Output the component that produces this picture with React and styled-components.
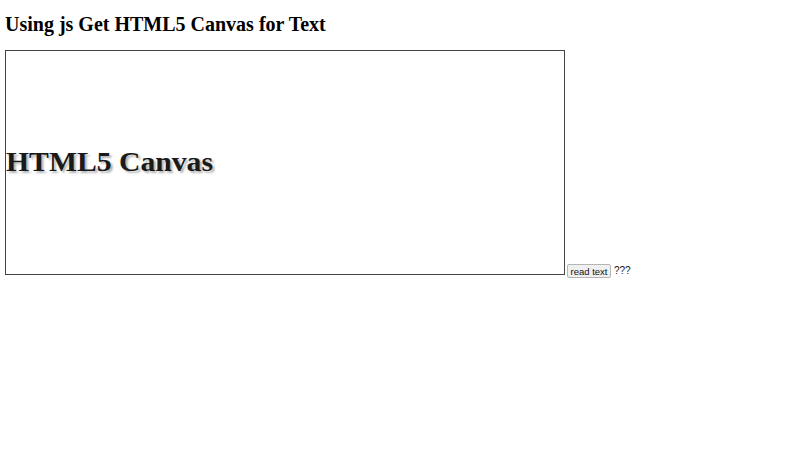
import React from "react";
import styled, { createGlobalStyle } from "styled-components";

const GlobalStyle = createGlobalStyle`
  html, body {
    margin: 0;
    background: #ffffff;
  }
  body {
    padding: 5px;
    font-family: "Liberation Serif", "Times New Roman", serif;
    color: #000;
  }
`;

const Title = styled.h1`
  margin: 8px 0 14px;
  font-size: 20px;
  font-weight: bold;
  line-height: 23px;
  font-family: "Liberation Serif", "Times New Roman", serif;
`;

const Row = styled.div`
  display: flex;
  align-items: flex-end;
  gap: 2px;
`;

const Surface = styled.div`
  box-sizing: border-box;
  width: 560px;
  height: 225px;
  border: 1px solid #444;
  display: flex;
  align-items: center;
`;

const SurfaceText = styled.span`
  display: inline-block;
  font-family: "Liberation Serif", "Times New Roman", serif;
  font-weight: bold;
  font-size: 26.5px;
  color: #1a1a1a;
  text-shadow: 2px 2px 2px rgba(0, 0, 0, 0.3);
  line-height: 1;
  transform: scaleX(1.12);
  transform-origin: left center;
`;

const Controls = styled.div`
  display: flex;
  align-items: center;
  gap: 3px;
  margin-bottom: -3px;
`;

const Button = styled.button`
  font-family: "Liberation Sans", Arial, sans-serif;
  font-size: 9.5px;
  line-height: 11px;
  padding: 0 2.5px;
  height: 14px;
  border: 1px solid #b5b5b5;
  border-radius: 2px;
  background: #f0f0f0;
  color: #111;
`;

const Status = styled.span`
  font-family: "Liberation Sans", Arial, sans-serif;
  font-size: 10px;
  color: #222;
  margin-bottom: 2px;
`;

export default function App() {
  return (
    <>
      <GlobalStyle />
      <Title>Using js Get HTML5 Canvas for Text</Title>
      <Row>
        <Surface>
          <SurfaceText>HTML5 Canvas</SurfaceText>
        </Surface>
        <Controls>
          <Button type="button">read text</Button>
          <Status>???</Status>
        </Controls>
      </Row>
    </>
  );
}
